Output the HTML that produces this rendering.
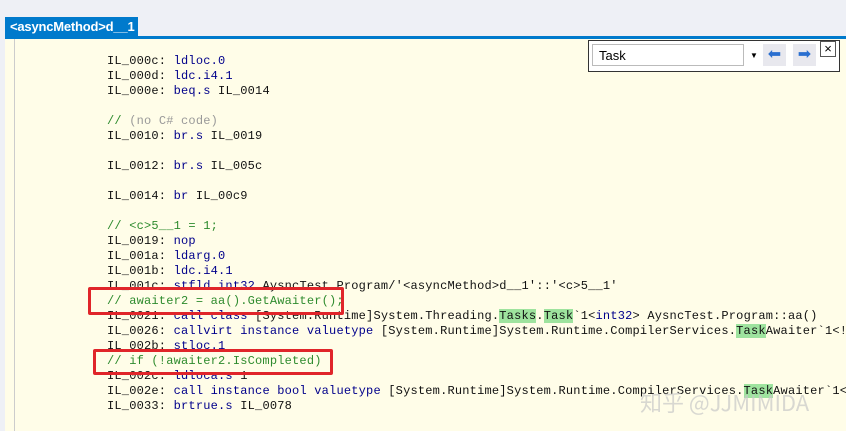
<!DOCTYPE html><html><head><style>
body{margin:0;width:846px;height:431px;overflow:hidden;background:#eef0f6;position:relative;font-family:"Liberation Sans",sans-serif}
.tb{position:absolute;left:0;top:0;width:846px;height:10px;background:#eef0f5}
.tab{position:absolute;left:5px;top:17px;width:133px;height:20px;background:#007acc;color:#fff;font-weight:bold;font-size:13px;line-height:20px;padding-left:5px;box-sizing:border-box;white-space:nowrap;overflow:hidden;letter-spacing:-0.2px}
.bar{position:absolute;left:5px;top:36px;width:841px;height:3px;background:#007acc}
.ed{position:absolute;left:5px;top:39px;width:841px;height:392px;background:#fffde8}
.mg{position:absolute;left:14px;top:39px;width:1px;height:392px;background:#ccc}
.code{position:absolute;left:107px;top:54px;font-family:"Liberation Mono",monospace;font-size:12px;letter-spacing:0.2px;line-height:15px;white-space:pre;color:#111}
.k{color:#00008b}.c{color:#2e8b2e}.g{color:#999}.h{background:#9ee39e}
.box{position:absolute;border:3px solid #e0252a;border-radius:2px}
.find{position:absolute;left:588px;top:40px;width:250px;height:30px;background:#fff;border:1px solid #333}
.inp{position:absolute;left:592px;top:44px;width:152px;height:22px;border:1px solid #bbb;font-size:13px;line-height:22px;padding-left:6px;box-sizing:border-box;font-family:"Liberation Sans",sans-serif}
</style></head><body>
<div class="tb"></div>
<div class="tab">&lt;asyncMethod&gt;d__1</div>
<div class="bar"></div>
<div class="ed"></div>
<div class="mg"></div>
<div class="code">IL_000c: <span class="k">ldloc.0</span>
IL_000d: <span class="k">ldc.i4.1</span>
IL_000e: <span class="k">beq.s</span> IL_0014

<span class="c">//</span> <span class="g">(no C# code)</span>
IL_0010: <span class="k">br.s</span> IL_0019

IL_0012: <span class="k">br.s</span> IL_005c

IL_0014: <span class="k">br</span> IL_00c9

<span class="c">// &lt;c&gt;5__1 = 1;</span>
IL_0019: <span class="k">nop</span>
IL_001a: <span class="k">ldarg.0</span>
IL_001b: <span class="k">ldc.i4.1</span>
IL_001c: <span class="k">stfld int32</span> AysncTest.Program/'&lt;asyncMethod&gt;d__1'::'&lt;c&gt;5__1'
<span class="c">// awaiter2 = aa().GetAwaiter();</span>
IL_0021: <span class="k">call class</span> [System.Runtime]System.Threading.<span class="h">Tasks</span>.<span class="h">Task</span>`1&lt;<span class="k">int32</span>&gt; AysncTest.Program::aa()
IL_0026: <span class="k">callvirt instance valuetype</span> [System.Runtime]System.Runtime.CompilerServices.<span class="h">Task</span>Awaiter`1&lt;!0&gt; cl
IL_002b: <span class="k">stloc.1</span>
<span class="c">// if (!awaiter2.IsCompleted)</span>
IL_002c: <span class="k">ldloca.s</span> 1
IL_002e: <span class="k">call instance bool valuetype</span> [System.Runtime]System.Runtime.CompilerServices.<span class="h">Task</span>Awaiter`1&lt;int32
IL_0033: <span class="k">brtrue.s</span> IL_0078</div>
<div class="box" style="left:88px;top:287px;width:250px;height:22px"></div>
<div class="box" style="left:93px;top:349px;width:234px;height:20px"></div>
<div class="find"></div>
<div class="inp">Task</div>
<div style="position:absolute;left:750px;top:51px;font-size:8px">▼</div>
<div style="position:absolute;left:763px;top:44px;width:23px;height:22px;background:#e8e8ee;color:#2a6fd0;font-size:16px;text-align:center;line-height:22px">⬅</div>
<div style="position:absolute;left:793px;top:44px;width:23px;height:22px;background:#e8e8ee;color:#2a6fd0;font-size:16px;text-align:center;line-height:22px">➡</div>
<div style="position:absolute;left:820px;top:41px;width:14px;height:14px;border:1px solid #555;background:#fff;font-size:13px;line-height:13px;text-align:center">×</div>
<div style="position:absolute;left:640px;top:386px;font-family:'Noto Sans CJK SC',sans-serif;font-size:22px;color:rgba(200,200,200,.7)">知乎 @JJMIMIDA</div>
</body></html>
